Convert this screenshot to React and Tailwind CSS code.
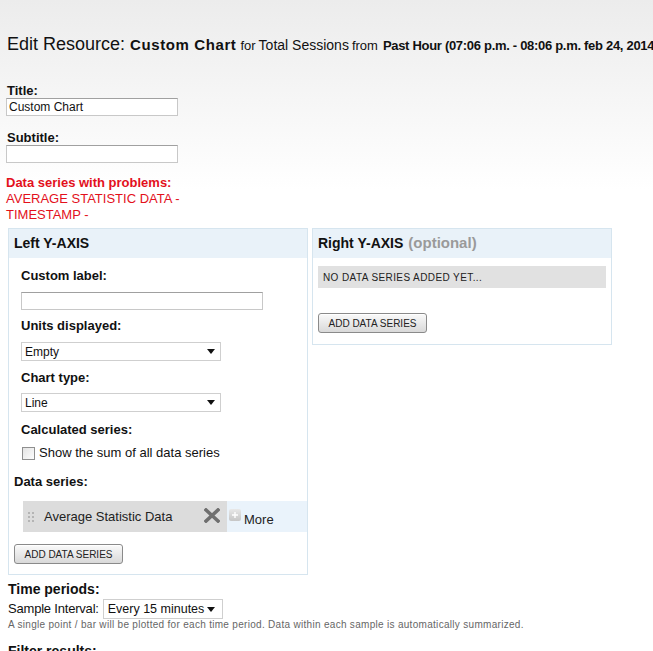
import React from "react";

const F = { fontFamily: '"Liberation Sans", Arial, sans-serif' };

function Label({ children, className = "" }) {
  return (
    <div className={"text-[13px] font-bold text-[#111] " + className}>
      {children}
    </div>
  );
}

function TextInput({ value = "", className = "" }) {
  return (
    <div
      className={
        "h-[18px] bg-white border border-[#c8c8c8] border-t-[#a0a0a0] text-[12px] leading-[16px] px-[2px] text-[#111] " +
        className
      }
    >
      {value}
    </div>
  );
}

function Select({ value, className = "" }) {
  return (
    <div
      className={
        "h-[19px] bg-white border border-[#cfcfcf] flex items-center justify-between pl-[3px] pr-[5px] text-[12px] text-[#111] " +
        className
      }
    >
      <span>{value}</span>
      <svg width="8" height="5" viewBox="0 0 8 5">
        <path d="M0 0H8L4 5Z" fill="#111" />
      </svg>
    </div>
  );
}

function Button({ children, className = "" }) {
  return (
    <div
      className={
        "w-[109px] h-[20px] flex items-center justify-center rounded-[3px] border border-[#8a8a8a] bg-gradient-to-b from-[#fafafa] to-[#d9d9d9] text-[10px] text-[#222] shadow-[inset_0_1px_0_#fff] " +
        className
      }
    >
      {children}
    </div>
  );
}

function PanelHeader({ children }) {
  return (
    <div className="h-[29px] bg-[#e9f2f9] flex items-center pl-[5px] text-[14px] font-bold text-[#111]">
      {children}
    </div>
  );
}

export default function App() {
  return (
    <div
      style={F}
      className="min-h-[651px] w-[653px] overflow-hidden bg-[linear-gradient(to_bottom,#ececec_0px,#ffffff_190px)] text-[#111]"
    >
      <div className="pt-[34px] pl-[7px] whitespace-nowrap flex items-baseline leading-[20px]">
        <span className="text-[18px]">Edit Resource:</span>
        <span className="ml-[5px] text-[15px] font-bold tracking-[0.6px]">Custom Chart</span>
        <span className="ml-[4px] text-[13px]">for</span>
        <span className="ml-[3px] text-[14px]">Total Sessions</span>
        <span className="ml-[3px] text-[13px]">from</span>
        <span className="ml-[5px] text-[13px] font-bold tracking-[-0.3px]">
          Past Hour (07:06 p.m. - 08:06 p.m. feb 24, 2014)
        </span>
      </div>

      <div className="pl-[6px]">
        <Label className="mt-[28px] pl-[1px] leading-[14px]">Title:</Label>
        <TextInput value="Custom Chart" className="w-[172px]" />
        <Label className="mt-[15px] pl-[1px] leading-[14px]">Subtitle:</Label>
        <TextInput className="w-[172px]" />

        <div className="mt-[12px] text-[13px] leading-[16px] text-[#e3101c]">
          <div className="font-bold">Data series with problems:</div>
          <div>AVERAGE STATISTIC DATA -</div>
          <div>TIMESTAMP -</div>
        </div>

        <div className="mt-[5px] ml-[2px] flex items-start gap-[4px]">
          {/* Left panel */}
          <div className="w-[300px] border border-[#d6e5ef] bg-white">
            <PanelHeader>Left Y-AXIS</PanelHeader>
            <div className="pl-[12px] pt-[10px]">
              <Label className="leading-[16px]">Custom label:</Label>
              <TextInput className="mt-[8px] w-[242px] h-[17px]" />
              <Label className="mt-[8px] leading-[16px]">Units displayed:</Label>
              <Select value="Empty" className="mt-[8px] w-[200px]" />
              <Label className="mt-[9px] leading-[16px]">Chart type:</Label>
              <Select value="Line" className="mt-[7px] w-[200px]" />
              <Label className="mt-[10px] leading-[16px]">Calculated series:</Label>
              <div className="mt-[7px] flex items-center h-[16px]">
                <div className="ml-[1px] w-[13px] h-[13px] border border-[#8f8f8f] bg-gradient-to-br from-[#e4e4e4] to-[#fdfdfd]" />
                <span className="ml-[4px] text-[13px]">Show the sum of all data series</span>
              </div>
            </div>
            <Label className="mt-[13px] pl-[5px] leading-[16px]">Data series:</Label>
            <div className="mt-[11px] ml-[14px] flex h-[31px]">
              <div className="w-[204px] bg-[#dcdcdc] flex items-center">
                <svg width="6" height="12" viewBox="0 0 6 12" className="ml-[5px]">
                  {[0, 4, 8].map((y) => (
                    <g key={y}>
                      <rect x="0" y={y + 1} width="2" height="2" fill="#b4b4b4" />
                      <rect x="4" y={y + 1} width="2" height="2" fill="#b4b4b4" />
                    </g>
                  ))}
                </svg>
                <span className="ml-[10px] text-[13px] text-[#222]">Average Statistic Data</span>
                <svg width="16" height="15" viewBox="0 0 16 15" className="ml-auto mr-[7px] mb-[2px]">
                  <path d="M2 2L14 13M14 2L2 13" stroke="#6f6f6f" strokeWidth="3.6" strokeLinecap="square" />
                </svg>
              </div>
              <div className="flex-1 bg-[#eaf3fb] flex items-center">
                <div className="ml-[2px] mb-[3px] w-[12px] h-[12px] rounded-[2px] bg-gradient-to-b from-[#e8e8e8] to-[#c6c6c6] flex items-center justify-center">
                  <svg width="6" height="6" viewBox="0 0 6 6">
                    <path d="M3 0V6M0 3H6" stroke="#fff" strokeWidth="1.4" />
                  </svg>
                </div>
                <span className="ml-[3px] mt-[6px] text-[13px] text-[#222]">More</span>
              </div>
            </div>
            <Button className="mt-[12px] ml-[5px] mb-[10px]">ADD DATA SERIES</Button>
          </div>

          {/* Right panel */}
          <div className="w-[300px] border border-[#d6e5ef] bg-white pb-[11px]">
            <PanelHeader>
              <span>Right Y-AXIS</span>
              <span className="ml-[5px] text-[15px] text-[#9a9a9a]">(optional)</span>
            </PanelHeader>
            <div className="mt-[8px] mx-[5px] h-[22px] bg-[#e1e1e1] flex items-center pl-[5px] text-[10px] tracking-[0.4px] text-[#222]">
              NO DATA SERIES ADDED YET...
            </div>
            <Button className="mt-[25px] ml-[5px]">ADD DATA SERIES</Button>
          </div>
        </div>

        <div className="pl-[2px]">
          <Label className="mt-[6px] text-[14px] leading-[16px]">Time periods:</Label>
          <div className="mt-[2px] flex items-center text-[13px] whitespace-nowrap">
            <span className="tracking-[-0.2px]">Sample Interval:</span>
            <div className="ml-[4px] w-[120px] h-[20px] bg-white border border-[#cfcfcf] flex items-center justify-between pl-[4px] pr-[7px] text-[12.5px]">
              <span>Every 15 minutes</span>
              <svg width="8" height="5" viewBox="0 0 8 5">
                <path d="M0 0H8L4 5Z" fill="#111" />
              </svg>
            </div>
          </div>
          <div className="mt-[0px] text-[10px] leading-[12px] tracking-[0.3px] text-[#666] whitespace-nowrap">
            A single point / bar will be plotted for each time period. Data within each sample is automatically summarized.
          </div>
          <Label className="mt-[12px] text-[14px] leading-[16px]">Filter results:</Label>
        </div>
      </div>
    </div>
  );
}
